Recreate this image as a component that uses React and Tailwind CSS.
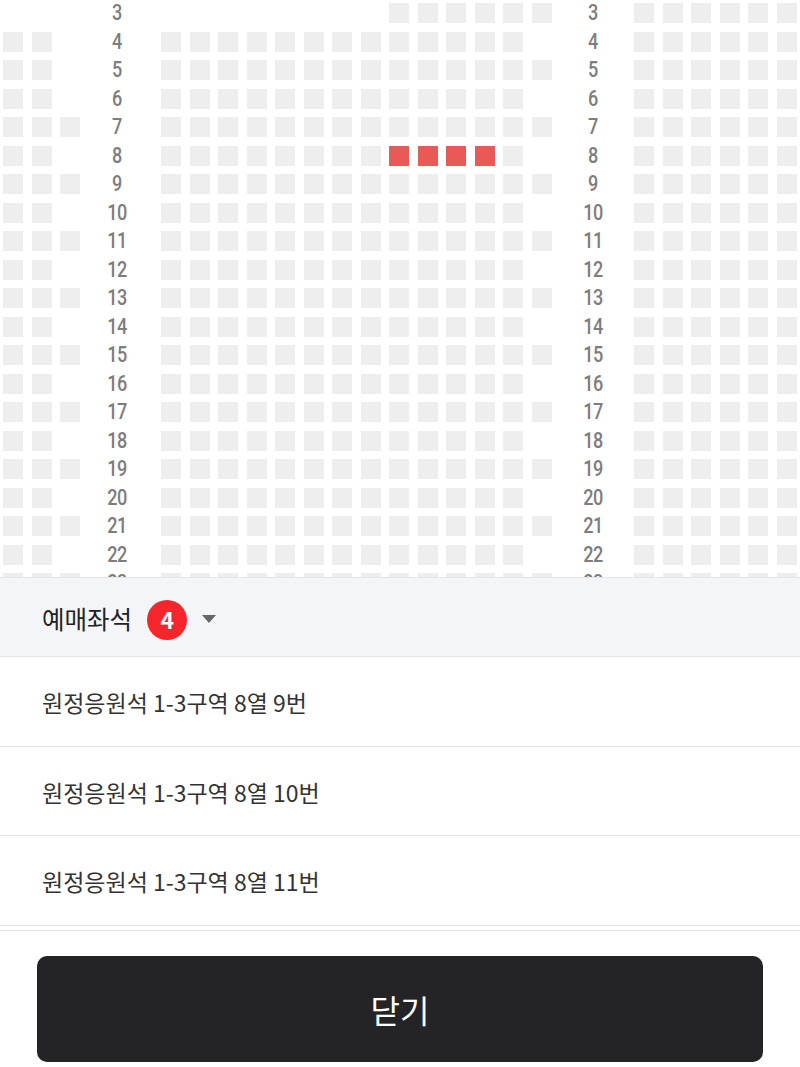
import React from "react";

const ROWS = Array.from({ length: 21 }, (_, i) => i + 3);
const PICKED = [9, 10, 11, 12];

const Seat = ({ on, red }) => (
  <div className={`w-[20px] h-[20px] shrink-0 ${on ? (red ? "bg-[#e85a55]" : "bg-[#eeeeee]") : ""}`} />
);

const Label = ({ row, w }) => (
  <div className={`${w} flex justify-center`}>
    <span
      className="inline-block scale-x-[0.82] text-[22px] leading-none font-medium text-[#7d7d7d] tracking-[-0.5px]"
      style={{ fontFamily: 'Roboto, "Liberation Sans", sans-serif' }}
    >
      {row}
    </span>
  </div>
);

const SeatRow = ({ row }) => {
  const odd = row % 2 === 1;
  const left = row === 3 ? [false, false, false] : [true, true, odd && row >= 7];
  const middle = Array.from({ length: 14 }, (_, i) => {
    const col = i + 1;
    if (row === 3) return col >= 9;
    if (col === 14) return odd;
    return true;
  });

  return (
    <div className="flex items-center h-[28.5px]">
      <div className="flex gap-[8.5px] w-[80px] pl-[3px]">
        {left.map((on, i) => (
          <Seat key={i} on={on} />
        ))}
      </div>
      <Label row={row} w="w-[75px]" />
      <div className="flex gap-[8.5px] w-[396.5px] pl-[6px]">
        {middle.map((on, i) => (
          <Seat key={i} on={on} red={row === 8 && PICKED.includes(i + 1)} />
        ))}
      </div>
      <Label row={row} w="w-[82.5px]" />
      <div className="flex gap-[8.5px]">
        {Array.from({ length: 6 }).map((_, i) => (
          <Seat key={i} on />
        ))}
      </div>
    </div>
  );
};

const items = ["원정응원석 1-3구역 8열 9번", "원정응원석 1-3구역 8열 10번", "원정응원석 1-3구역 8열 11번"];

export default function App() {
  return (
    <div
      className="w-[800px] h-[1067px] bg-white overflow-hidden flex flex-col"
      style={{ fontFamily: '"Noto Sans CJK KR", "Noto Sans", sans-serif' }}
    >
      {/* seat map */}
      <div className="h-[577px] overflow-hidden shrink-0">
        <div className="-mt-[1px]">
          {ROWS.map((r) => (
            <SeatRow key={r} row={r} />
          ))}
        </div>
      </div>

      {/* selected seats panel */}
      <div className="h-[80px] shrink-0 bg-[#f4f5f9] border-t border-b border-[#e4e5ea] flex items-center pl-[42px] pt-[5px]">
        <span className="text-[24.5px] text-[#222]">예매좌석</span>
        <span className="ml-[15px] w-[40px] h-[40px] rounded-full bg-[#f5262b] text-white text-[23px] font-bold flex items-center justify-center leading-none">
          4
        </span>
        <svg className="ml-[15px]" width="14" height="9" viewBox="0 0 14 9">
          <path d="M0 0 L14 0 L7 8 Z" fill="#666" />
        </svg>
      </div>
      {items.map((t) => (
        <div key={t} className="h-[89.5px] shrink-0 border-b border-[#e4e5ea] flex items-center pl-[42px] pt-[2px] text-[23px] text-[#333]">
          {t}
        </div>
      ))}

      <div className="mt-[4px] border-t border-[#e4e5ea] pt-[25px] px-[37px]">
        <button className="w-full h-[106px] rounded-[10px] bg-[#242426] text-white text-[32px] flex items-center justify-center">
          닫기
        </button>
      </div>
    </div>
  );
}
